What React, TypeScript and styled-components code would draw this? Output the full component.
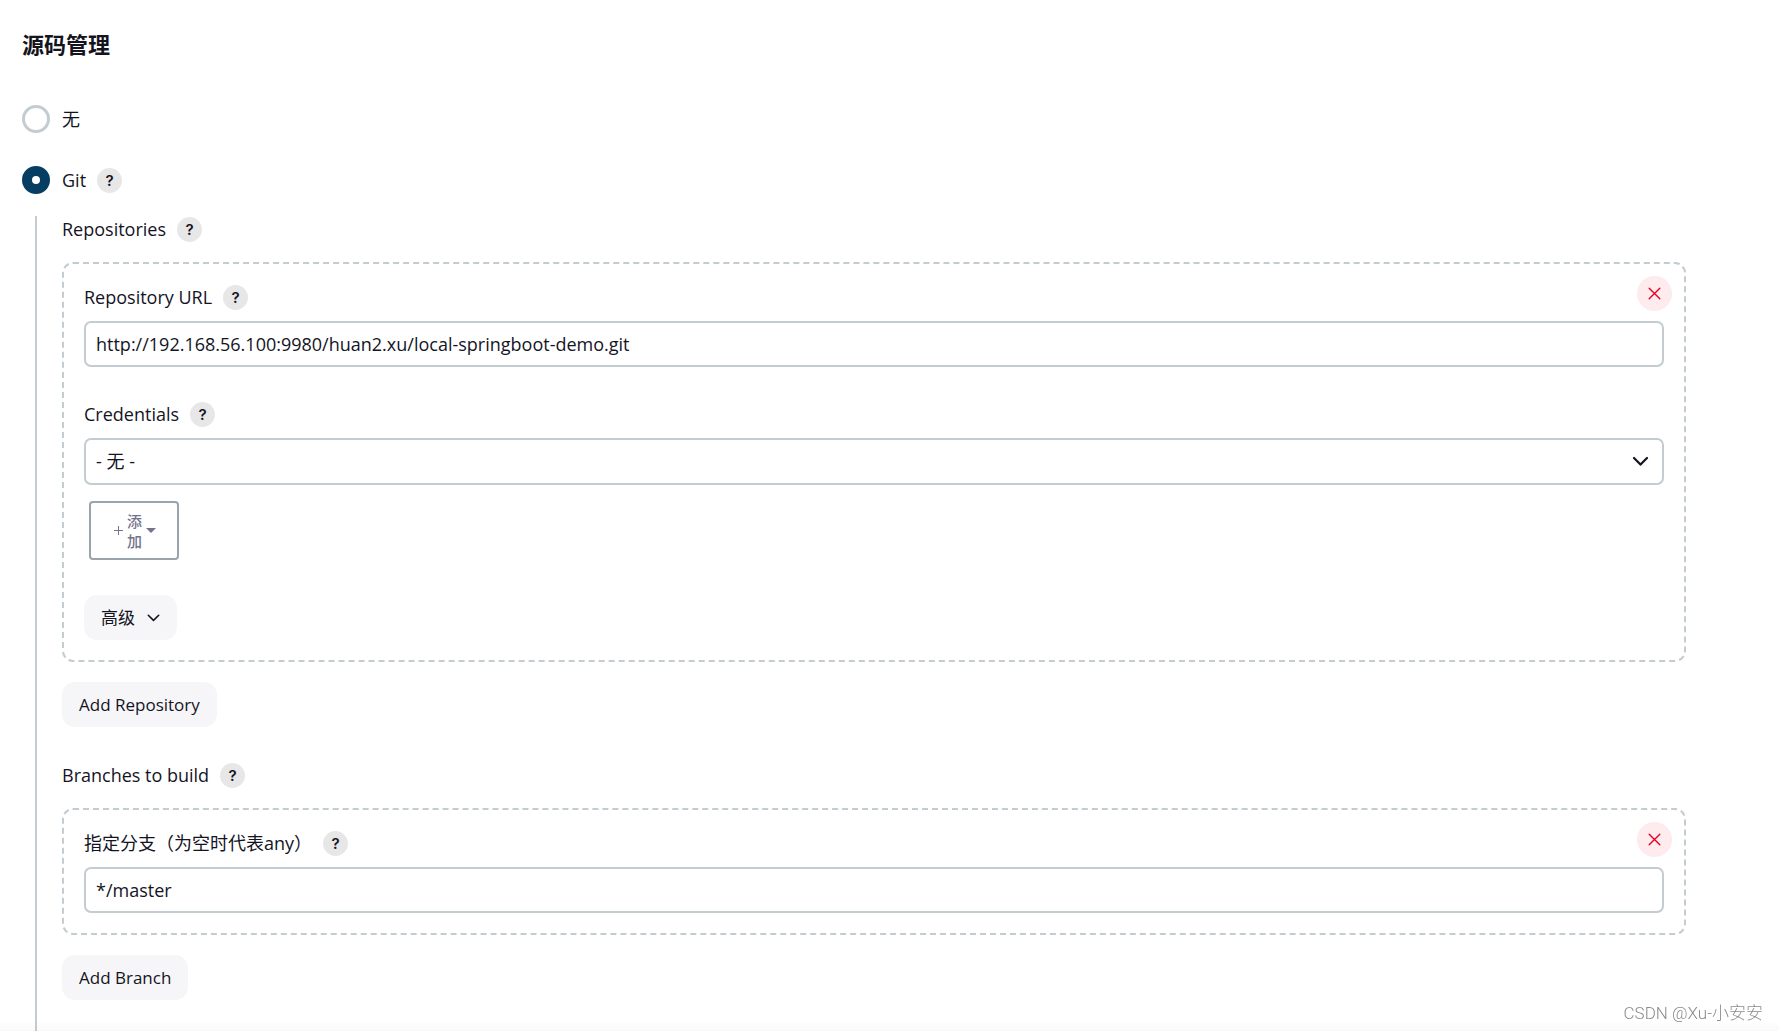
import React, { useId, useState } from "react";
import styled, { createGlobalStyle, css } from "styled-components";

const ink = "#14141f";
const line = "#c3ccd1";
const sans = `"Open Sans", "Noto Sans CJK SC", sans-serif`;

const GlobalStyle = createGlobalStyle`
  *, *::before, *::after { box-sizing: border-box; }
  body {
    margin: 0;
    background: #fff;
    color: ${ink};
    font: 18px/27px ${sans};
  }
  button, input, select { font: inherit; color: inherit; }
`;

const Page = styled.main`
  display: flex;
  flex-direction: column;
  min-height: 100vh;
  padding: 29px 93px 0 22px;
`;

const Title = styled.h2`
  margin: 0 0 46px;
  font-size: 22px;
  line-height: 30px;
  font-weight: 700;
`;

const Choices = styled.div`
  display: flex;
  flex-direction: column;
  gap: 33px;
  margin-bottom: 22px;
`;

const Choice = styled.div`
  display: flex;
  align-items: center;
  height: 28px;
`;

const Radio = styled.input`
  appearance: none;
  flex: none;
  width: 28px;
  height: 28px;
  margin: 0 12px 0 0;
  border: 3px solid ${line};
  border-radius: 50%;
  background: #fff;

  &:checked {
    border: 10px solid #063e63;
  }
`;

const Nested = styled.div`
  flex: 1;
  display: flex;
  flex-direction: column;
  align-items: flex-start;
  margin-left: 13px;
  padding: 0 0 31px 25px;
  border-left: 2px solid ${line};
`;

const LabelRow = styled.div<{ $gap: number }>`
  display: flex;
  align-items: center;
  height: 27px;
  margin-bottom: ${(p) => p.$gap}px;
`;

const HelpButton = styled.button`
  flex: none;
  width: 25px;
  height: 25px;
  margin-left: 11px;
  padding: 0;
  border: 0;
  border-radius: 50%;
  background: #e7e7e7;
  font: 600 15px/25px Inter, sans-serif;
  text-align: center;
`;

const Card = styled.section`
  position: relative;
  align-self: stretch;
  padding: 20px;
  border: 2px dashed ${line};
  border-radius: 11px;
  margin-bottom: 20px;
`;

const RemoveButton = styled.button`
  position: absolute;
  top: 12px;
  right: 12px;
  display: grid;
  place-items: center;
  width: 35px;
  height: 35px;
  padding: 0;
  border: 0;
  border-radius: 50%;
  background: #fdebed;
  color: #e6001f;
`;

const control = css`
  display: block;
  width: 100%;
  margin: 0;
  padding: 0 10px;
  border: 2px solid ${line};
  border-radius: 7px;
  background: #fff;
`;

const TextInput = styled.input`
  ${control}
  height: 46px;
`;

const SelectWrap = styled.div`
  position: relative;
  margin-bottom: 16px;
`;

const Select = styled.select`
  ${control}
  height: 47px;
  appearance: none;
`;

const SelectArrow = styled.svg`
  position: absolute;
  top: 18px;
  right: 15px;
  pointer-events: none;
`;

const Field = styled.div`
  & + & {
    margin-top: 34px;
  }
`;

const AddCredential = styled.button`
  display: flex;
  align-items: center;
  justify-content: center;
  gap: 4px;
  width: 90px;
  height: 59px;
  margin: 0 0 35px 5px;
  padding: 0 0 0 2px;
  border: 2px solid #98a5ae;
  border-radius: 4px;
  background: #fff;
  color: #73738c;
  font-size: 15px;
  line-height: 20px;
  font-weight: 500;
`;

const Stacked = styled.span`
  width: 15px;
  word-break: break-all;
`;

const SoftButton = styled.button<{ $spaced?: boolean }>`
  display: flex;
  align-items: center;
  gap: 12px;
  height: 45px;
  margin: 0 0 ${(p) => (p.$spaced ? 35 : 0)}px;
  padding: 0 17px;
  border: 0;
  border-radius: 13px;
  background: #f6f6f9;
  font-size: 17px;
`;

const Watermark = styled.div`
  position: fixed;
  right: 16px;
  bottom: 4px;
  color: #8c8c8c;
  font: 300 17px/27px Roboto, "Noto Sans CJK SC", sans-serif;
`;

const BottomShade = styled.div`
  position: fixed;
  inset: auto 0 0 0;
  height: 10px;
  background: linear-gradient(rgba(0, 0, 0, 0), rgba(0, 0, 0, 0.025));
`;

function Help({ topic }: { topic: string }) {
  return <HelpButton type="button" aria-label={`Help: ${topic}`}>?</HelpButton>;
}

function Remove() {
  return (
    <RemoveButton type="button" aria-label="Delete">
      <svg width="13" height="13" viewBox="0 0 13 13" fill="none" stroke="currentColor" strokeWidth="1.4" strokeLinecap="round">
        <path d="M1.2 1.2 11.8 11.8M11.8 1.2 1.2 11.8" />
      </svg>
    </RemoveButton>
  );
}

function TextField({ label, initial }: { label: string; initial: string }) {
  const id = useId();
  const [value, setValue] = useState(initial);
  return (
    <Field>
      <LabelRow $gap={10}>
        <label htmlFor={id}>{label}</label>
        <Help topic={label} />
      </LabelRow>
      <TextInput id={id} type="text" value={value} onChange={(e) => setValue(e.target.value)} />
    </Field>
  );
}

export default function App() {
  const [scm, setScm] = useState("git");
  return (
    <>
      <GlobalStyle />
      <Page>
        <Title>源码管理</Title>
        <Choices>
          <Choice>
            <Radio type="radio" name="scm" id="scm-none" checked={scm === "none"} onChange={() => setScm("none")} />
            <label htmlFor="scm-none">无</label>
          </Choice>
          <Choice>
            <Radio type="radio" name="scm" id="scm-git" checked={scm === "git"} onChange={() => setScm("git")} />
            <label htmlFor="scm-git">Git</label>
            <Help topic="Git" />
          </Choice>
        </Choices>
        <Nested>
          <LabelRow $gap={19}>
            <span>Repositories</span>
            <Help topic="Repositories" />
          </LabelRow>
          <Card>
            <Remove />
            <TextField label="Repository URL" initial="http://192.168.56.100:9980/huan2.xu/local-springboot-demo.git" />
            <Field>
              <LabelRow $gap={10}>
                <label htmlFor="credentials">Credentials</label>
                <Help topic="Credentials" />
              </LabelRow>
              <SelectWrap>
                <Select id="credentials" defaultValue="">
                  <option value="">- 无 -</option>
                </Select>
                <SelectArrow width="17" height="11" viewBox="0 0 17 11" fill="none" stroke={ink} strokeWidth="2.2" strokeLinecap="round" strokeLinejoin="round">
                  <path d="M2 2 8.5 8.6 15 2" />
                </SelectArrow>
              </SelectWrap>
            </Field>
            <AddCredential type="button">
              <svg width="9" height="9" viewBox="0 0 9 9" stroke="currentColor" strokeWidth="1">
                <path d="M0 4.5H9M4.5 0V9" />
              </svg>
              <Stacked>添加</Stacked>
              <svg width="10" height="5" viewBox="0 0 10 5" fill="currentColor">
                <path d="M0 0H10L5 5Z" />
              </svg>
            </AddCredential>
            <SoftButton type="button">
              高级
              <svg width="13" height="8" viewBox="0 0 13 8" fill="none" stroke={ink} strokeWidth="1.6" strokeLinecap="round" strokeLinejoin="round">
                <path d="M1.3 1.3 6.5 6.4 11.7 1.3" />
              </svg>
            </SoftButton>
          </Card>
          <SoftButton type="button" $spaced>Add Repository</SoftButton>
          <LabelRow $gap={19}>
            <span>Branches to build</span>
            <Help topic="Branches to build" />
          </LabelRow>
          <Card>
            <Remove />
            <TextField label="指定分支（为空时代表any）" initial="*/master" />
          </Card>
          <SoftButton type="button">Add Branch</SoftButton>
        </Nested>
      </Page>
      <BottomShade />
      <Watermark>CSDN @Xu-小安安</Watermark>
    </>
  );
}
